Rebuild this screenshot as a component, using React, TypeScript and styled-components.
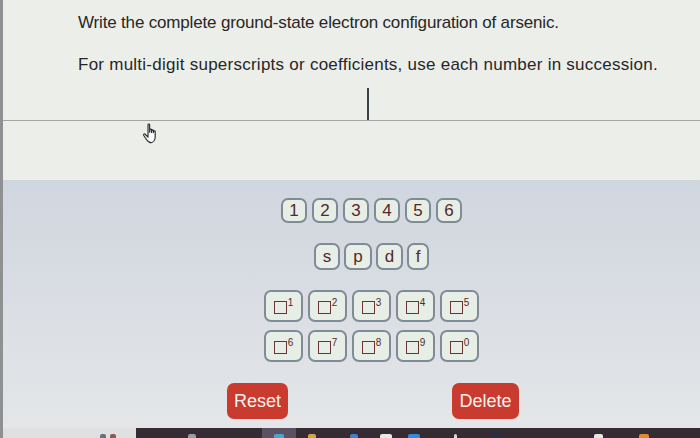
import React from 'react'
import styled, { createGlobalStyle } from 'styled-components'

const GlobalStyle = createGlobalStyle`
  html, body {
    margin: 0;
    padding: 0;
    background: #e9ebe7;
  }
  body {
    font-family: "Liberation Sans", Arial, sans-serif;
  }
`

const Page = styled.div`
  position: relative;
  width: 700px;
  height: 438px;
  box-sizing: border-box;
  border-left: 3px solid #8e9092;
  overflow: hidden;
  display: flex;
  flex-direction: column;
  background: #eceeea;
`

const Question = styled.div`
  padding: 13px 0 0 75px;
  display: flex;
  flex-direction: column;
  gap: 22px;
`

const QuestionText = styled.p<{ $track: number }>`
  margin: 0;
  font-size: 17px;
  line-height: 20px;
  letter-spacing: ${p => p.$track}px;
  color: #272727;
`

const AnswerField = styled.div`
  margin-top: 13px;
  height: 32px;
  border-bottom: 1px solid #a3a5a6;
  display: flex;
  align-items: flex-end;
  padding-left: 364px;
`

const Caret = styled.div`
  width: 1.5px;
  height: 32px;
  background: #3a4048;
`

const Spacer = styled.div`
  height: 59px;
`

const Pointer = styled.svg`
  position: absolute;
  left: 139px;
  top: 123px;
`

const Keypad = styled.div`
  flex: 1;
  background: linear-gradient(180deg, #d0d6df 0%, #d9dde3 45%, #e4e6e8 100%);
  padding: 18px 0 0 40px;
  display: flex;
  flex-direction: column;
  align-items: center;
`

const KeyRow = styled.div<{ $gap: number; $mt: number }>`
  display: flex;
  gap: ${p => p.$gap}px;
  margin-top: ${p => p.$mt}px;
`

const Key = styled.div<{ $w: number; $h: number }>`
  width: ${p => p.$w}px;
  height: ${p => p.$h}px;
  box-sizing: border-box;
  border: 2px solid #7f8b97;
  border-radius: 7px;
  background: #e6eee5;
  display: flex;
  align-items: center;
  justify-content: center;
  font-size: 17px;
  color: #55282b;
`

const Box = styled.span`
  width: 11px;
  height: 11px;
  border: 1.5px solid #6a3234;
  margin-top: 3px;
`

const Sup = styled.span`
  font-size: 10px;
  line-height: 10px;
  margin-left: 1px;
  margin-top: -7px;
  color: #55282b;
`

const ActionRow = styled.div`
  display: flex;
  gap: 164px;
  margin-top: 21px;
  margin-left: 3px;
`

const RedButton = styled.div<{ $w: number }>`
  width: ${p => p.$w}px;
  height: 36px;
  border-radius: 7px;
  background: #c83b2e;
  color: #fbf1ee;
  font-size: 18px;
  display: flex;
  align-items: center;
  justify-content: center;
`

const Taskbar = styled.div`
  height: 10px;
  display: flex;
`

const Tray = styled.div`
  width: 133px;
  background: #dfe0df;
  display: flex;
  align-items: flex-end;
  gap: 4px;
  padding-left: 97px;
  box-sizing: border-box;
`

const Bar = styled.div`
  flex: 1;
  background: #352b32;
  display: flex;
  align-items: flex-end;
`

const TaskIcon = styled.div<{ $x: number; $c: string; $w?: number }>`
  margin-left: ${p => p.$x}px;
  width: ${p => p.$w ?? 8}px;
  height: 4px;
  border-radius: 2px 2px 0 0;
  background: ${p => p.$c};
`

const Active = styled.div`
  margin-left: 66px;
  width: 34px;
  height: 10px;
  background: #5a5262;
  display: flex;
  align-items: flex-end;
  justify-content: center;
`

const digits = ['1', '2', '3', '4', '5', '6']
const orbitals = [
  { l: 's', w: 26 },
  { l: 'p', w: 28 },
  { l: 'd', w: 27 },
  { l: 'f', w: 22 },
]
const supRows = [
  ['1', '2', '3', '4', '5'],
  ['6', '7', '8', '9', '0'],
]

const App: React.FC = () => {
  return (
    <>
      <GlobalStyle />
      <Page>
        <Question>
          <QuestionText $track={-0.17}>Write the complete ground-state electron configuration of arsenic.</QuestionText>
          <QuestionText $track={0.25}>For multi-digit superscripts or coefficients, use each number in succession.</QuestionText>
        </Question>
        <AnswerField>
          <Caret />
        </AnswerField>
        <Spacer />
        <Pointer width="19" height="22" viewBox="0 0 16 19">
          <path
            d="M5 1.5c0-.8 1.4-.8 1.4 0V8l.2-2.2c0-.8 1.4-.8 1.4 0V8.2l.2-1.6c0-.8 1.4-.8 1.4 0v1.8l.2-1c0-.8 1.4-.8 1.4 0V12c0 2.5-1.5 5-4.5 5H7.5C5.5 17 4.5 15.5 3.5 14L1.2 10.6c-.5-.8.6-1.6 1.3-.9L5 12.2z"
            fill="#fbfbfb"
            stroke="#2c2c2c"
            strokeWidth="1"
            strokeLinejoin="round"
          />
        </Pointer>
        <Keypad>
          <KeyRow $gap={5} $mt={0}>
            {digits.map(d => (
              <Key key={d} $w={26} $h={25}>{d}</Key>
            ))}
          </KeyRow>
          <KeyRow $gap={4} $mt={20}>
            {orbitals.map(o => (
              <Key key={o.l} $w={o.w} $h={27}>{o.l}</Key>
            ))}
          </KeyRow>
          {supRows.map((row, i) => (
            <KeyRow key={i} $gap={5} $mt={i === 0 ? 20 : 8}>
              {row.map(n => (
                <Key key={n} $w={39} $h={32}>
                  <Box />
                  <Sup>{n}</Sup>
                </Key>
              ))}
            </KeyRow>
          ))}
          <ActionRow>
            <RedButton $w={61}>Reset</RedButton>
            <RedButton $w={67}>Delete</RedButton>
          </ActionRow>
        </Keypad>
        <Taskbar>
          <Tray>
            <TaskIcon $x={0} $c="#6b6f78" $w={6} />
            <TaskIcon $x={0} $c="#8a5a5a" $w={6} />
          </Tray>
          <Bar>
            <TaskIcon $x={52} $c="#9a9aa0" />
            <Active>
              <TaskIcon $x={0} $c="#4aa3d8" $w={10} />
            </Active>
            <TaskIcon $x={12} $c="#d8a640" />
            <TaskIcon $x={34} $c="#3a7fd0" />
            <TaskIcon $x={22} $c="#e8e8e8" $w={12} />
            <TaskIcon $x={16} $c="#2d8de0" $w={12} />
            <TaskIcon $x={34} $c="#d8d8d8" $w={3} />
            <TaskIcon $x={32} $c="#23304a" $w={12} />
            <TaskIcon $x={93} $c="#e6e6e6" $w={9} />
            <TaskIcon $x={36} $c="#e08a2c" $w={10} />
          </Bar>
        </Taskbar>
      </Page>
    </>
  )
}

export default App
